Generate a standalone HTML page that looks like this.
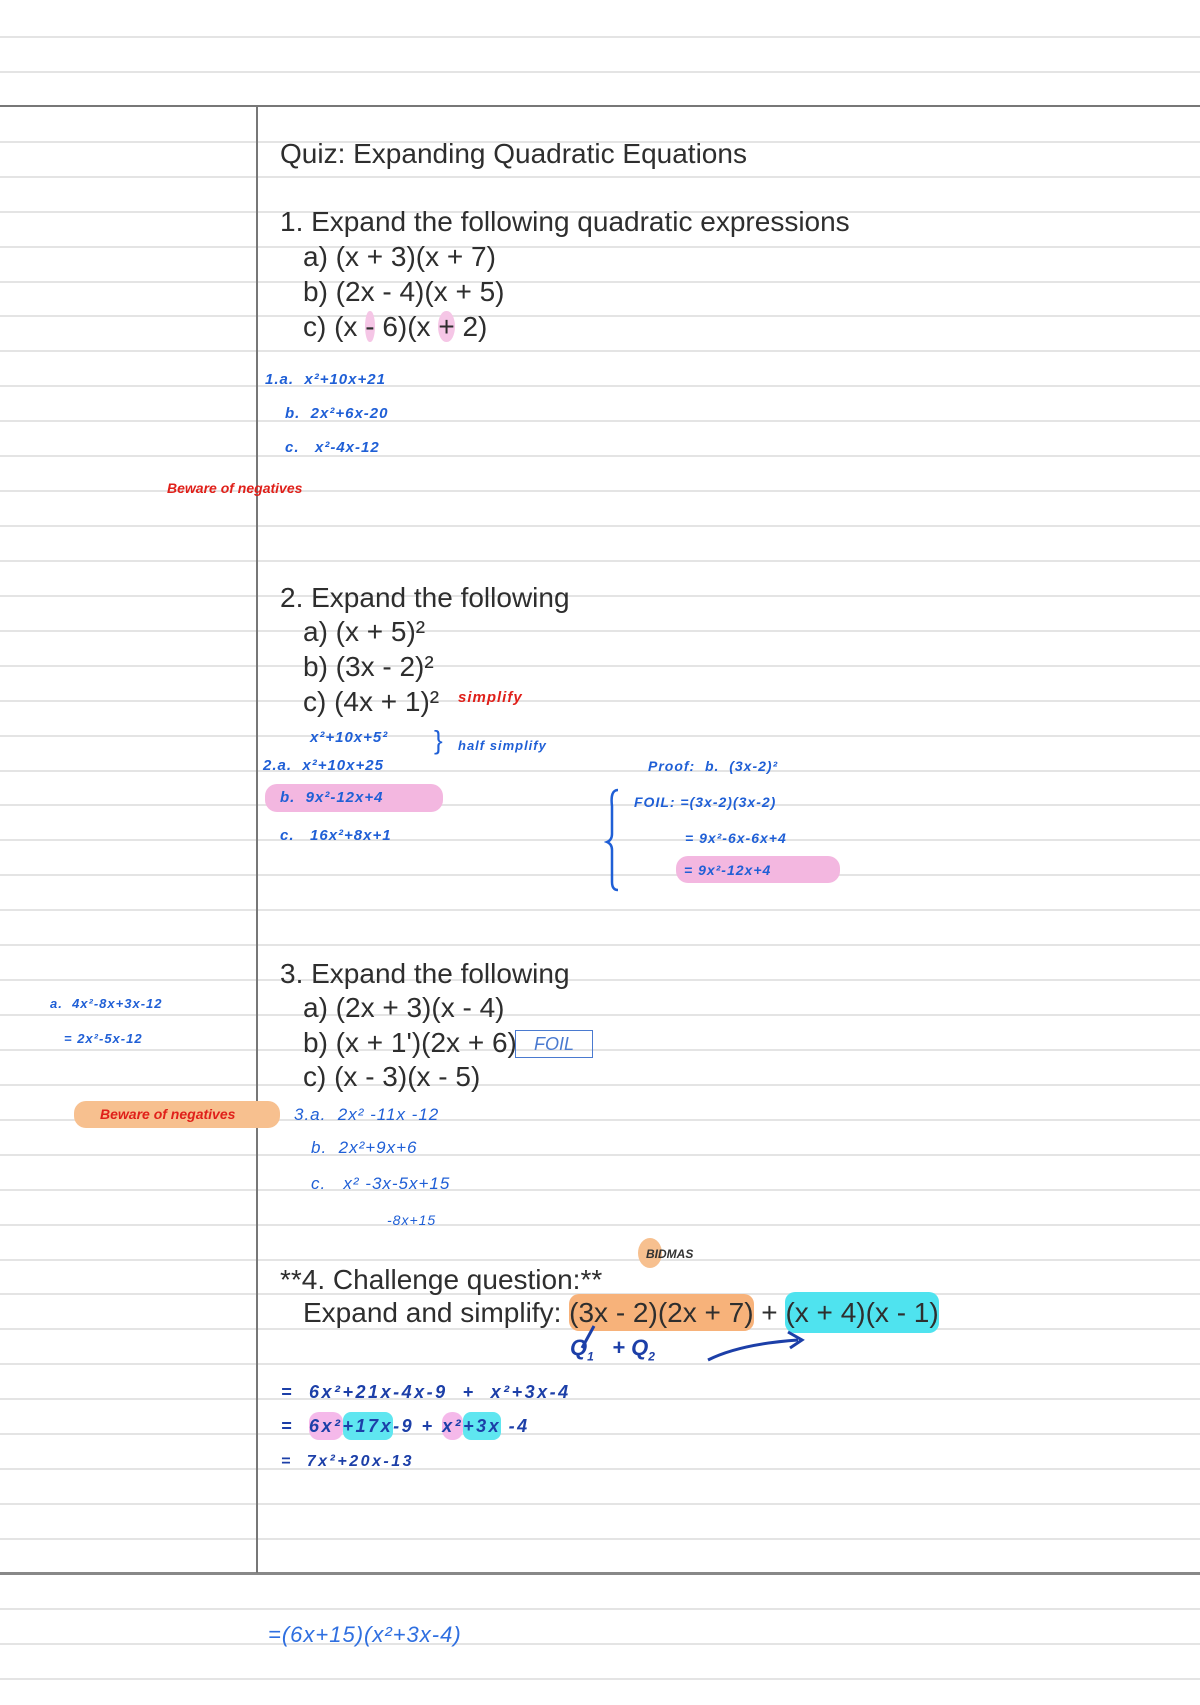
<!DOCTYPE html>
<html><head><meta charset="utf-8"><style>
body{margin:0;width:1200px;height:1705px;position:relative;background:#fff;overflow:hidden;font-family:"Liberation Sans",sans-serif}
.l{position:absolute;left:0;width:1200px;height:2px;background:#e4e4e4}
.t{position:absolute;font-size:28px;color:#2e2e2e;white-space:nowrap;letter-spacing:0px;line-height:32px}
.h{position:absolute;font-size:15px;font-weight:bold;font-style:italic;color:#1f5fd6;white-space:nowrap;line-height:20px;letter-spacing:1px}
.r{color:#e0201a}
.d{color:#1c3fa8;font-size:18px;letter-spacing:2.5px}
.hl{position:absolute;border-radius:12px}
.pk{background:#f5c6e6;border-radius:50%}
.or{background:#f7b27a;border-radius:10px;padding:3px 0}
.cy{background:#4fe3ef;border-radius:10px;padding:5px 0}
.pk2{background:#f5b9ea;border-radius:10px;padding:4px 0}
.cy2{background:#5fe6f0;border-radius:8px;padding:4px 0}
</style></head><body>
<div id="lines"></div>
<script>
var s='';for(var k=0;k<48;k++){var y=Math.round(36+34.93*k);if(k==2)continue;s+='<div class="l" style="top:'+y+'px"></div>';}
document.getElementById('lines').innerHTML=s;
</script>
<div style="position:absolute;left:0;top:105px;width:1200px;height:2px;background:#777"></div>
<div style="position:absolute;left:0;top:1572px;width:1200px;height:3px;background:#888"></div>
<div style="position:absolute;left:256px;top:106px;width:2px;height:1467px;background:#777"></div>

<div class="hl" style="left:265px;top:784px;width:178px;height:28px;background:#f3b7e0"></div>
<div class="hl" style="left:676px;top:856px;width:164px;height:27px;background:#f3b7e0"></div>
<div class="hl" style="left:74px;top:1101px;width:206px;height:27px;background:#f7c08f"></div>
<div class="hl" style="left:638px;top:1238px;width:24px;height:30px;background:#f7c08f;border-radius:50%"></div>

<div class="t" style="left:280px;top:138px">Quiz: Expanding Quadratic Equations</div>
<div class="t" style="left:280px;top:206px">1. Expand the following quadratic expressions</div>
<div class="t" style="left:303px;top:241px">a) (x + 3)(x + 7)</div>
<div class="t" style="left:303px;top:276px">b) (2x - 4)(x + 5)</div>
<div class="t" style="left:303px;top:311px">c) (x <span class="pk">-</span> 6)(x <span class="pk">+</span> 2)</div>

<div class="h" style="left:265px;top:370px">1.a.&nbsp; x²+10x+21</div>
<div class="h" style="left:285px;top:404px">b.&nbsp; 2x²+6x-20</div>
<div class="h" style="left:285px;top:438px">c.&nbsp;&nbsp; x²-4x-12</div>
<div class="h r" style="left:167px;top:478px;font-size:14px;letter-spacing:0">Beware of negatives</div>

<div class="t" style="left:280px;top:582px">2. Expand the following</div>
<div class="t" style="left:303px;top:616px">a) (x + 5)²</div>
<div class="t" style="left:303px;top:651px">b) (3x - 2)²</div>
<div class="t" style="left:303px;top:686px">c) (4x + 1)²</div>
<div class="h r" style="left:458px;top:688px">simplify</div>
<div class="h" style="left:310px;top:728px">x²+10x+5²</div>
<div class="h" style="left:434px;top:730px;font-size:26px;font-style:normal;font-weight:normal">}</div>
<div class="h" style="left:458px;top:736px;font-size:13px">half simplify</div>
<div class="h" style="left:263px;top:756px">2.a.&nbsp; x²+10x+25</div>
<div class="h" style="left:280px;top:788px">b.&nbsp; 9x²-12x+4</div>
<div class="h" style="left:280px;top:826px">c.&nbsp;&nbsp; 16x²+8x+1</div>
<div class="h" style="left:648px;top:756px;font-size:14px">Proof:&nbsp; b.&nbsp; (3x-2)²</div>
<div class="h" style="left:634px;top:792px;font-size:14px">FOIL: =(3x-2)(3x-2)</div>
<div class="h" style="left:685px;top:828px;font-size:14px">= 9x²-6x-6x+4</div>
<div class="h" style="left:684px;top:860px;font-size:14px">= 9x²-12x+4</div>
<svg style="position:absolute;left:604px;top:786px" width="20" height="110"><path d="M14 4 Q6 4 8 20 L8 48 Q8 54 3 56 Q8 58 8 64 L8 96 Q8 104 14 104" fill="none" stroke="#1f5fd6" stroke-width="2.5"/></svg>

<div class="t" style="left:280px;top:958px">3. Expand the following</div>
<div class="t" style="left:303px;top:992px">a) (2x + 3)(x - 4)</div>
<div class="t" style="left:303px;top:1027px">b) (x + 1')(2x + 6)</div>
<div class="t" style="left:303px;top:1061px">c) (x - 3)(x - 5)</div>
<div style="position:absolute;left:515px;top:1030px;width:76px;height:26px;border:1.5px solid #4a7ad0;color:#4a7ad0;font-style:italic;font-size:18px;line-height:26px;text-align:center">FOIL</div>
<div class="h" style="left:50px;top:994px;font-size:13px">a.&nbsp; 4x²-8x+3x-12</div>
<div class="h" style="left:64px;top:1029px;font-size:13px">= 2x²-5x-12</div>
<div class="h r" style="left:100px;top:1104px;font-size:14px;letter-spacing:0">Beware of negatives</div>
<div class="h" style="left:294px;top:1105px;font-size:17px;font-weight:normal">3.a.&nbsp; 2x² -11x -12</div>
<div class="h" style="left:311px;top:1138px;font-size:17px;font-weight:normal">b.&nbsp; 2x²+9x+6</div>
<div class="h" style="left:311px;top:1174px;font-size:17px;font-weight:normal">c.&nbsp;&nbsp; x² -3x-5x+15</div>
<div class="h" style="left:387px;top:1210px;font-size:14px;font-weight:normal">-8x+15</div>
<div class="h" style="left:646px;top:1244px;font-size:12px;color:#333;letter-spacing:0">BIDMAS</div>

<div class="t" style="left:280px;top:1264px">**4. Challenge question:**</div>
<div class="t" style="left:303px;top:1297px">Expand and simplify: <span class="or">(3x - 2)(2x + 7)</span> + <span class="cy">(x + 4)(x - 1)</span></div>
<div class="h d" style="left:570px;top:1338px;font-size:22px;letter-spacing:0">Q<sub style="font-size:12px">1</sub>&nbsp;&nbsp; + Q<sub style="font-size:12px">2</sub></div>
<svg style="position:absolute;left:580px;top:1320px" width="240" height="50"><path d="M2 28 L14 6" stroke="#1c3fa8" stroke-width="3" fill="none"/><path d="M128 40 Q160 24 218 20" stroke="#1c3fa8" stroke-width="3" fill="none"/><path d="M208 12 L222 20 L210 28" stroke="#1c3fa8" stroke-width="3" fill="none"/></svg>
<div class="h d" style="left:281px;top:1382px">=&nbsp; 6x²+21x-4x-9&nbsp; +&nbsp; x²+3x-4</div>
<div class="h d" style="left:281px;top:1416px">=&nbsp; <span class="pk2">6x²</span><span class="cy2">+17x</span>-9 + <span class="pk2">x²</span><span class="cy2">+3x</span> -4</div>
<div class="h d" style="left:281px;top:1452px;font-size:16px">=&nbsp; 7x²+20x-13</div>
<div class="h" style="left:268px;top:1625px;font-size:22px;font-weight:normal;color:#2f6fe0">=(6x+15)(x²+3x-4)</div>
</body></html>
